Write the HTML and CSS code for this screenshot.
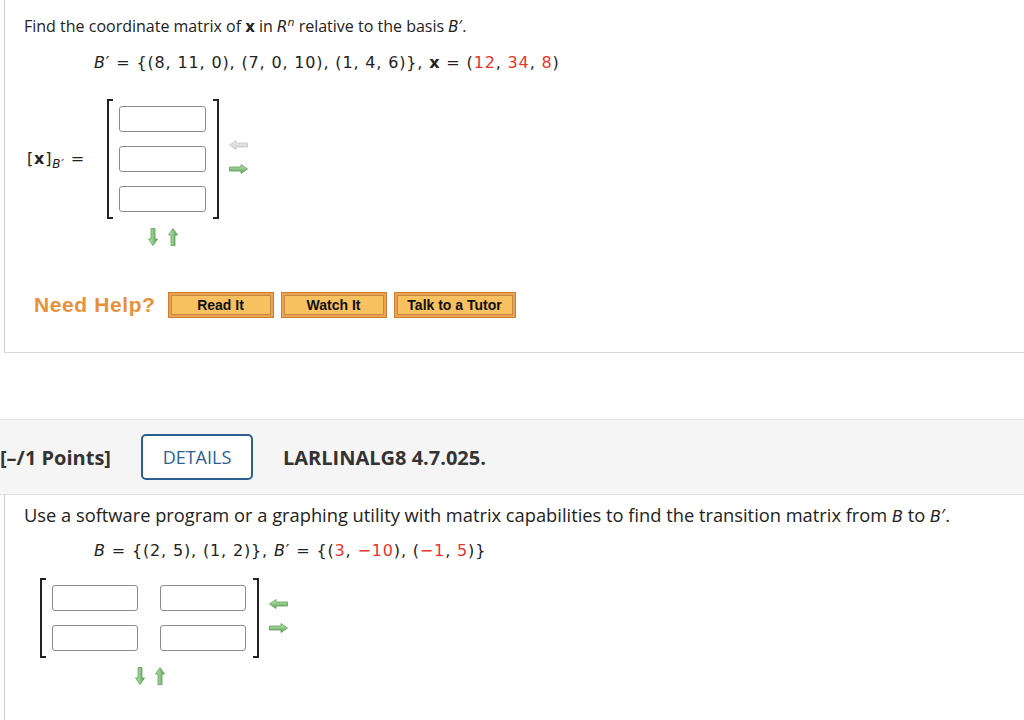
FILE: index.html
```html
<!DOCTYPE html>
<html lang="en">
<head>
<meta charset="utf-8">
<title>Coordinate matrix</title>
<link rel="stylesheet" href="styles.css">
</head>
<body>
<section class="card card-1">
  <p class="prompt">Find the coordinate matrix of <b class="vec">x</b> in <i class="sym">R</i><sup class="sup"><i>n</i></sup> relative to the basis <i class="sym">B</i>′.</p>
  <p class="math math-1"><i>B</i>′ = {(8, 11, 0), (7, 0, 10), (1, 4, 6)}, <b>x</b> = (<span class="red">12</span>, <span class="red">34</span>, <span class="red">8</span>)</p>
  <div class="answer answer-labeled">
    <div class="label">[<b>x</b>]<sub><i>B</i>′</sub> =</div>
    <div class="matrix">
      <span class="brk brk-l"></span>
      <div class="cells cells-1col">
        <input class="cell cell-w87" type="text">
        <input class="cell cell-w87" type="text">
        <input class="cell cell-w87" type="text">
      </div>
      <span class="brk brk-r"></span>
    </div>
    <div class="harrows">
      <svg class="harrow" width="19" height="10" viewBox="0 0 19 10"><path d="M18.5 3 H7 V0.5 L0.5 5 L7 9.5 V7 H18.5 Z" fill="url(#gGray)" stroke="#c4c4c4" stroke-width="0.8"/></svg>
      <svg class="harrow" width="19" height="10" viewBox="0 0 19 10"><path d="M0.5 3 H12 V0.5 L18.5 5 L12 9.5 V7 H0.5 Z" fill="url(#gH)" stroke="#5f9f58" stroke-width="0.8"/></svg>
    </div>
    <div class="varrows">
      <svg width="10" height="18" viewBox="0 0 10 18"><path d="M3 0.5 H7 V11 H9.5 L5 17.5 L0.5 11 H3 Z" fill="url(#gV)" stroke="#5f9f58" stroke-width="0.8"/></svg>
      <svg width="10" height="18" viewBox="0 0 10 18"><path d="M3 17.5 H7 V7 H9.5 L5 0.5 L0.5 7 H3 Z" fill="url(#gV)" stroke="#5f9f58" stroke-width="0.8"/></svg>
    </div>
  </div>
  <div class="help">
    <span class="need">Need Help?</span>
    <button class="hbtn hbtn-106" type="button"><span class="hbtn-in">Read It</span></button>
    <button class="hbtn hbtn-106" type="button"><span class="hbtn-in">Watch It</span></button>
    <button class="hbtn hbtn-122" type="button"><span class="hbtn-in">Talk to a Tutor</span></button>
  </div>
</section>

<header class="qhead">
  <span class="pts">[–/1 Points]</span>
  <button class="details" type="button">DETAILS</button>
  <span class="qid">LARLINALG8 4.7.025.</span>
</header>

<section class="card card-2">
  <p class="prompt prompt-2">Use a software program or a graphing utility with matrix capabilities to find the transition matrix from <i class="sym">B</i> to <i class="sym">B</i>′.</p>
  <p class="math math-2"><i>B</i> = {(2, 5), (1, 2)}, <i>B</i>′ = {(<span class="red">3</span>, <span class="red">−10</span>), (<span class="red">−1</span>, <span class="red">5</span>)}</p>
  <div class="answer answer-plain">
    <div class="matrix">
      <span class="brk brk-l"></span>
      <div class="cells cells-2col">
        <input class="cell cell-w86" type="text">
        <input class="cell cell-w86" type="text">
        <input class="cell cell-w86" type="text">
        <input class="cell cell-w86" type="text">
      </div>
      <span class="brk brk-r"></span>
    </div>
    <div class="harrows">
      <svg class="harrow" width="19" height="10" viewBox="0 0 19 10"><path d="M18.5 3 H7 V0.5 L0.5 5 L7 9.5 V7 H18.5 Z" fill="url(#gH)" stroke="#5f9f58" stroke-width="0.8"/></svg>
      <svg class="harrow" width="19" height="10" viewBox="0 0 19 10"><path d="M0.5 3 H12 V0.5 L18.5 5 L12 9.5 V7 H0.5 Z" fill="url(#gH)" stroke="#5f9f58" stroke-width="0.8"/></svg>
    </div>
    <div class="varrows">
      <svg width="10" height="18" viewBox="0 0 10 18"><path d="M3 0.5 H7 V11 H9.5 L5 17.5 L0.5 11 H3 Z" fill="url(#gV)" stroke="#5f9f58" stroke-width="0.8"/></svg>
      <svg width="10" height="18" viewBox="0 0 10 18"><path d="M3 17.5 H7 V7 H9.5 L5 0.5 L0.5 7 H3 Z" fill="url(#gV)" stroke="#5f9f58" stroke-width="0.8"/></svg>
    </div>
  </div>
</section>

<svg class="defs" width="0" height="0" aria-hidden="true">
  <defs>
    <linearGradient id="gH" x1="0" y1="0" x2="0" y2="1">
      <stop offset="0" stop-color="#c8e6c2"/>
      <stop offset="0.5" stop-color="#8fc987"/>
      <stop offset="1" stop-color="#4e9a48"/>
    </linearGradient>
    <linearGradient id="gV" x1="0" y1="0" x2="1" y2="0">
      <stop offset="0" stop-color="#c8e6c2"/>
      <stop offset="0.5" stop-color="#8fc987"/>
      <stop offset="1" stop-color="#4e9a48"/>
    </linearGradient>
    <linearGradient id="gGray" x1="0" y1="0" x2="0" y2="1">
      <stop offset="0" stop-color="#f0f0f0"/>
      <stop offset="1" stop-color="#cfcfcf"/>
    </linearGradient>
  </defs>
</svg>
</body>
</html>
```

FILE: styles.css
```css
html, body {
  margin: 0;
  padding: 0;
  background: #ffffff;
  overflow: hidden;
}

body {
  font-family: "Open Sans", "DejaVu Sans", sans-serif;
  color: #222222;
  width: 1024px;
  height: 720px;
}

.card {
  margin-left: 4px;
  border-left: 1px solid #cfcfcf;
  padding-left: 19px;
}

.card-1 {
  padding-top: 14px;
  padding-bottom: 34px;
  border-bottom: 1px solid #d6d6d6;
}

.card-2 {
  padding-top: 8px;
  height: 300px;
}

.prompt {
  margin: 0;
  font-size: 16px;
  line-height: 24px;
  color: #222222;
  white-space: nowrap;
}

.prompt-2 {
  font-size: 18.3px;
}

.prompt .vec {
  font-family: "DejaVu Sans", sans-serif;
  font-size: 15px;
}

.prompt .sym {
  font-family: "DejaVu Sans", sans-serif;
  font-size: 15px;
}

.prompt-2 .sym {
  font-size: 16px;
}

.prompt .sup {
  font-family: "DejaVu Sans", sans-serif;
  font-size: 11px;
  line-height: 0;
  vertical-align: 6px;
}

.math {
  margin: 12px 0 0 70px;
  font-family: "DejaVu Sans", sans-serif;
  font-size: 16px;
  letter-spacing: 0.85px;
  line-height: 24px;
  color: #222222;
  white-space: nowrap;
}

.math-2 {
  margin-top: 10px;
}

.red {
  color: #e8352b;
}

.answer {
  display: grid;
  justify-content: start;
  align-items: center;
}

.answer-labeled {
  grid-template-columns: 80px auto auto;
  margin: 24px 0 0 3px;
}

.answer-plain {
  grid-template-columns: auto auto;
  margin: 15px 0 0 16px;
}

.label {
  font-family: "DejaVu Sans", sans-serif;
  font-size: 16px;
  letter-spacing: 0.8px;
  line-height: 20px;
  color: #222222;
}

.label sub {
  font-size: 12px;
  line-height: 0;
  vertical-align: -4px;
}

.matrix {
  display: flex;
  align-items: stretch;
}

.brk {
  display: block;
  width: 4px;
  border-top: 2px solid #222222;
  border-bottom: 2px solid #222222;
}

.brk-l {
  border-left: 2px solid #222222;
  margin-right: 6px;
}

.brk-r {
  border-right: 2px solid #222222;
  margin-left: 7px;
}

.cells {
  display: grid;
  row-gap: 14px;
  padding: 7px 0;
}

.cells-2col {
  grid-template-columns: auto auto;
  column-gap: 22px;
}

.cell {
  display: block;
  box-sizing: border-box;
  height: 26px;
  margin: 0;
  padding: 0;
  border: 1px solid #8c8c8c;
  border-radius: 3px;
  background: #ffffff;
}

.cell-w87 {
  width: 87px;
}

.cell-w86 {
  width: 86px;
}

.harrows {
  display: flex;
  flex-direction: column;
  gap: 14px;
  margin: 0 0 4px 10px;
}

.harrow {
  display: block;
}

.varrows {
  display: flex;
  gap: 10px;
  margin-top: 9px;
  justify-self: center;
}

.answer-labeled .varrows {
  grid-column: 2;
}

.answer-plain .varrows {
  grid-column: 1;
}

.varrows svg {
  display: block;
}

.help {
  display: flex;
  align-items: center;
  height: 26px;
  margin: 46px 0 0 10px;
}

.need {
  font-family: "Liberation Sans", Arial, sans-serif;
  font-weight: bold;
  font-size: 21px;
  letter-spacing: 0.6px;
  color: #e8913a;
  margin-right: 12px;
}

.hbtn {
  box-sizing: border-box;
  height: 26px;
  padding: 2px;
  margin: 0 7px 0 0;
  border: 1px solid #c98036;
  background: #eda24e;
  font-family: "Liberation Sans", Arial, sans-serif;
  font-weight: bold;
  font-size: 14px;
  color: #111111;
  cursor: pointer;
}

.hbtn-106 {
  width: 106px;
}

.hbtn-122 {
  width: 122px;
}

.hbtn-in {
  display: block;
  height: 100%;
  box-sizing: border-box;
  border: 1px solid #c48744;
  background: #f6c15e;
  line-height: 18px;
}

.qhead {
  display: flex;
  align-items: center;
  box-sizing: border-box;
  height: 76px;
  margin-top: 66px;
  background: #f5f5f5;
  border-top: 1px solid #e2e2e2;
  border-bottom: 1px solid #e2e2e2;
  font-family: "Open Sans", sans-serif;
  color: #333333;
}

.pts {
  font-size: 20px;
  font-weight: 700;
  margin-left: 0;
}

.details {
  box-sizing: border-box;
  width: 112px;
  height: 46px;
  margin-left: 30px;
  border: 2px solid #2c5f91;
  border-radius: 5px;
  background: #ffffff;
  font-family: "Open Sans", sans-serif;
  font-size: 18px;
  color: #2c5f91;
  padding: 0;
}

.qid {
  margin-left: 30px;
  font-size: 20px;
  font-weight: 700;
}

.defs {
  display: block;
  width: 0;
  height: 0;
}
```
